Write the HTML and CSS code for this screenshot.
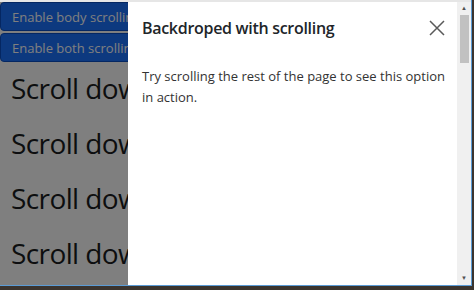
FILE: index.html
```html
<!DOCTYPE html>
<html lang="en">
<head>
    <meta charset="UTF-8">
    <meta name="viewport" content="width=device-width, initial-scale=1.0">
    <title>offcanvas-demo</title>
    <link rel="stylesheet" href="styles.css">
</head>
<body>
    <div class="window">
        <div class="top-strip"></div>
        <div class="frame">
            <div class="viewport">
                <div class="page">
                    <button class="btn">Enable body scrolling</button>
                    <button class="btn">Enable both scrolling &amp; backdrop</button>
                    <h1 class="scroll-text">Scroll down</h1>
                    <h1 class="scroll-text">Scroll down</h1>
                    <h1 class="scroll-text">Scroll down</h1>
                    <h1 class="scroll-text">Scroll down</h1>
                </div>
                <div class="backdrop"></div>
                <div class="offcanvas">
                    <div class="offcanvas-header">
                        <h5 class="offcanvas-title">Backdroped with scrolling</h5>
                        <button class="btn-close" aria-label="Close">
                            <svg width="16" height="16" viewBox="0 0 16 16">
                                <path d="M1 1L15 15M15 1L1 15" stroke="#5a5a5a" stroke-width="1.5" fill="none"/>
                            </svg>
                        </button>
                    </div>
                    <div class="offcanvas-body">
                        <p>Try scrolling the rest of the page to see this option in action.</p>
                    </div>
                </div>
            </div>
            <div class="scrollbar">
                <span class="arrow">&#9650;</span>
                <div class="track"><div class="thumb"></div></div>
                <span class="arrow">&#9660;</span>
            </div>
        </div>
    </div>
</body>
</html>
```

FILE: styles.css
```css
body {
    margin: 0;
    padding: 0;
    background-color: #3b342e;
    font-family: "Open Sans", "Noto Sans", sans-serif;
    overflow: hidden;
}

.window {
    width: 471px;
    height: 285px;
    background-color: #ffffff;
    border-right: 1px solid #5b9bd5;
    border-bottom: 1px solid #5b9bd5;
    display: flex;
    flex-direction: column;
}

.top-strip {
    height: 2px;
    background-color: #e6e6e6;
}

.frame {
    flex: 1;
    display: flex;
    min-height: 0;
}

.viewport {
    flex: 1;
    position: relative;
    overflow: hidden;
    background-color: #ffffff;
}

.page {
    display: flex;
    flex-direction: column;
    align-items: flex-start;
}

.btn {
    font-family: inherit;
    font-size: 13px;
    color: #ffffff;
    background-color: #1a72ff;
    border: 1px solid #0b4fc4;
    border-radius: 4px;
    padding: 0 11px;
    height: 29px;
    margin: 1px 0 1px 0;
    white-space: nowrap;
    text-align: left;
}

.btn:first-child {
    margin-top: 0;
}

.scroll-text {
    font-size: 28px;
    font-weight: 500;
    letter-spacing: -0.6px;
    color: #1a1d21;
    margin: 0 0 0 11px;
    height: 55px;
    line-height: 50px;
}

.backdrop {
    position: absolute;
    inset: 0;
    background-color: rgba(0, 0, 0, 0.5);
}

.offcanvas {
    position: absolute;
    top: 0;
    bottom: 0;
    left: 128px;
    right: 0;
    background-color: #ffffff;
    display: flex;
    flex-direction: column;
}

.offcanvas-header {
    display: flex;
    align-items: center;
    justify-content: space-between;
    padding: 13px 12px 0 14px;
    height: 26px;
}

.offcanvas-title {
    margin: 0;
    font-size: 16px;
    font-weight: 600;
    letter-spacing: -0.3px;
    color: #212529;
}

.btn-close {
    background: none;
    border: none;
    padding: 0;
    width: 16px;
    height: 16px;
    display: flex;
}

.offcanvas-body {
    padding: 25px 6px 0 14px;
}

.offcanvas-body p {
    margin: 0;
    font-size: 13px;
    line-height: 21px;
    color: #333333;
}

.scrollbar {
    width: 14px;
    background-color: #f0f0f0;
    display: flex;
    flex-direction: column;
    align-items: center;
}

.arrow {
    font-size: 6px;
    color: #505050;
    height: 13px;
    line-height: 13px;
}

.track {
    flex: 1;
    width: 100%;
}

.thumb {
    width: 9px;
    height: 48px;
    margin: 0 auto;
    background-color: #c1c1c1;
}
```
